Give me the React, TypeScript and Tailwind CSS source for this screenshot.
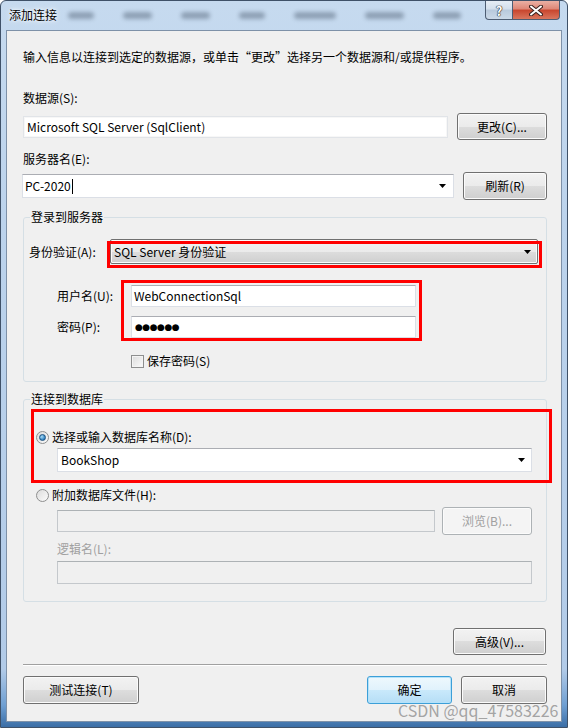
import type { ReactNode } from 'react';

// Win7-style push button faces
function Button({ children, className = '', primary = false, disabled = false }: { children: ReactNode, className?: string, primary?: boolean, disabled?: boolean }) {
    const face = primary
        ? 'border-[#3c9fd8] bg-[linear-gradient(#eef8fd_0%,#e0f2fc_50%,#c9e9fb_50%,#b6def6_100%)] shadow-[inset_0_0_0_1px_#b4e2fa]'
        : disabled
            ? 'border-[#adb2b5] bg-[#f4f4f4] text-[#a0a0a0] shadow-[inset_0_0_0_1px_#fbfbfb]'
            : 'border-[#707070] bg-[linear-gradient(#f2f2f2_0%,#ebebeb_50%,#dddddd_50%,#cfcfcf_100%)] shadow-[inset_0_0_0_1px_#fbfbfb]';
    return (
        <div className={`flex items-center justify-center rounded-[3px] border text-[12px] leading-4 ${face} ${className}`}>
            {children}
        </div>
    );
}

function Arrow() {
    return (
        <svg width="7" height="4" viewBox="0 0 7 4" className="shrink-0">
            <path d="M0 0h7L3.5 4z" fill="#000" />
        </svg>
    );
}

function TextBox({ children, className = '', disabled = false }: { children?: ReactNode, className?: string, disabled?: boolean }) {
    const look = disabled
        ? 'border-[#c4c8cc] border-t-[#adb2b5] bg-[#f0f0f0]'
        : 'border-[#dbdfe6] border-t-[#abadb3] bg-white';
    return (
        <div className={`flex items-center border px-[2px] text-[12px] leading-4 ${look} ${className}`}>
            {children}
        </div>
    );
}

function Radio({ checked = false }: { checked?: boolean }) {
    return (
        <div className="flex h-[13px] w-[13px] shrink-0 items-center justify-center rounded-full border border-[#8e8f8f] bg-[linear-gradient(135deg,#dcdcdc,#fbfbfb)]">
            {checked && <div className="h-[7px] w-[7px] rounded-full border border-[#1c5180] bg-[radial-gradient(circle_at_35%_35%,#a9dcf6,#2d7fbf_70%)]" />}
        </div>
    );
}

// a red frame drawn over the highlighted controls
function Mark({ className }: { className: string }) {
    return <div className={`pointer-events-none absolute border-[3px] border-[#ff0000] ${className}`} />;
}

function TitleBar() {
    return (
        <div className="flex h-[29px] shrink-0 items-start">
            <div className="mt-[6px] ml-[8px] text-[12px] leading-4 text-black [text-shadow:0_0_6px_#fff,0_0_3px_#fff]">添加连接</div>
            {/* glass shows the blurred menu behind it */}
            <div className="mt-[11px] ml-[11px] flex gap-[29px] opacity-40 blur-[2px]">
                <div className="h-[7px] w-[26px] rounded bg-[#3a4a5e]" />
                <div className="h-[7px] w-[29px] rounded bg-[#3a4a5e]" />
                <div className="h-[7px] w-[29px] rounded bg-[#3a4a5e]" />
                <div className="h-[7px] w-[26px] rounded bg-[#3a4a5e]" />
                <div className="h-[7px] w-[42px] rounded bg-[#3a4a5e]" />
                <div className="h-[7px] w-[39px] rounded bg-[#3a4a5e]" />
                <div className="h-[7px] w-[28px] rounded bg-[#3a4a5e]" />
            </div>
            <div className="ml-auto mr-[7px] flex">
                <div className="flex h-[19px] w-[28px] items-center justify-center rounded-bl-[4px] border border-t-0 border-[#4d5d73] bg-[linear-gradient(#e6edf5_0%,#d3dfec_45%,#b8c9dc_50%,#cbd9e8_100%)] text-[13px] font-bold leading-none text-white [text-shadow:0_0_1px_#222,0_0_1px_#222,0_0_1px_#222]">?</div>
                <div className="flex h-[19px] w-[47px] items-center justify-center rounded-br-[4px] border border-l-0 border-t-0 border-[#4d5d73] bg-[linear-gradient(#eab0a4_0%,#dd8676_45%,#c8452d_50%,#d9765e_100%)]">
                    <svg width="14" height="11" viewBox="0 0 14 11">
                        <path d="M2 1.5l10 8M12 1.5l-10 8" stroke="#3b2320" strokeWidth="4" strokeLinecap="round" />
                        <path d="M2 1.5l10 8M12 1.5l-10 8" stroke="#fff" strokeWidth="2" strokeLinecap="round" />
                    </svg>
                </div>
            </div>
        </div>
    );
}

export default function App() {
    return (
        <div className="relative flex h-[728px] w-[568px] flex-col overflow-hidden rounded-t-[6px] border border-[#3f5168] bg-[linear-gradient(#c6daef_0%,#bcd3ec_30%,#b2cbe8_92%,#6f9fd2_97%,#3b6ea6_100%)] font-['Noto_Sans_CJK_SC',sans-serif] text-black">
            <TitleBar />

            <div className="mx-[5px] flex h-[692px] flex-col border border-[#7e91a8] bg-[#f0f0f0] pl-[16px] pr-[14px]">
                <p className="mt-[18px] text-[12px] leading-4">输入信息以连接到选定的数据源，或单击“更改”选择另一个数据源和/或提供程序。</p>

                <div className="mt-[25px] text-[12px] leading-4">数据源(S):</div>
                <div className="mt-[7px] flex h-[27px] items-center gap-[9px]">
                    <TextBox className="h-[22px] flex-1 border-[#e1e4e8] border-t-[#e1e4e8] bg-[#f0f0f0] shadow-[inset_0_0_0_1px_#f7f7f7]">
                        <span className="ml-px">Microsoft SQL Server (SqlClient)</span>
                    </TextBox>
                    <Button className="h-[27px] w-[90px]">更改(C)...</Button>
                </div>

                <div className="mt-[11px] text-[12px] leading-4">服务器名(E):</div>
                <div className="mt-[5px] -ml-px flex h-[28px] items-center gap-[9px]">
                    <TextBox className="h-[24px] flex-1 justify-between pr-[7px]">
                        <span className="flex items-center">PC-2020<span className="ml-px inline-block h-[15px] w-px bg-black" /></span>
                        <Arrow />
                    </TextBox>
                    <Button className="h-[28px] w-[84px]">刷新(R)</Button>
                </div>

                {/* login */}
                <fieldset className="mt-[9px] rounded-[3px] border border-[#d5dfe5] pb-[12px]">
                    <legend className="ml-[6px] px-px text-[12px] leading-4">登录到服务器</legend>
                    <div className="mt-[14px] flex items-center pl-[5px] pr-[8px]">
                        <div className="w-[81px] shrink-0 text-[12px] leading-4">身份验证(A):</div>
                        <div className="relative flex-1">
                            <div className="flex h-[25px] items-center justify-between rounded-[2px] border border-[#707070] bg-[linear-gradient(#f2f2f2_0%,#ebebeb_50%,#dddddd_50%,#cfcfcf_100%)] pl-[3px] pr-[6px] text-[12px] leading-4 shadow-[inset_0_0_0_1px_#fbfbfb]">
                                <span>SQL Server 身份验证</span>
                                <Arrow />
                            </div>
                            <Mark className="-left-[3px] -right-[4px] top-[2px] -bottom-[4px]" />
                        </div>
                    </div>

                    <div className="mt-[21px] flex pl-[33px]">
                        <div className="flex w-[74px] shrink-0 flex-col gap-[9px] text-[12px] leading-4">
                            <div className="flex h-[22px] items-center">用户名(U):</div>
                            <div className="flex h-[22px] items-center">密码(P):</div>
                        </div>
                        <div className="relative flex w-[285px] flex-col gap-[9px]">
                            <TextBox className="h-[22px]">WebConnectionSql</TextBox>
                            <TextBox className="h-[22px]">
                                <span className="ml-px font-['DejaVu_Sans',sans-serif] text-[9px] tracking-[-0.5px]">●●●●●●</span>
                            </TextBox>
                            <Mark className="-left-[10px] -right-[6px] -top-[5px] -bottom-[3px]" />
                        </div>
                    </div>

                    <div className="mt-[15px] flex items-center gap-[3px] pl-[107px] text-[12px] leading-4">
                        <div className="h-[13px] w-[13px] border border-[#8e8f8f] bg-[linear-gradient(135deg,#dcdcdc,#fbfbfb)] shadow-[inset_0_0_0_1px_#f4f4f4]" />
                        <span>保存密码(S)</span>
                    </div>
                </fieldset>

                {/* database */}
                <fieldset className="mt-[9px] rounded-[3px] border border-[#d5dfe5] pb-[17px]">
                    <legend className="ml-[6px] px-px text-[12px] leading-4">连接到数据库</legend>
                    <div className="relative mt-[22px] ml-[12px] mr-[14px]">
                        <div className="flex items-center gap-[3px] text-[12px] leading-4">
                            <Radio checked />
                            <span>选择或输入数据库名称(D):</span>
                        </div>
                        <TextBox className="mt-[3px] ml-[21px] h-[24px] justify-between pr-[6px]">
                            <span className="ml-px">BookShop</span>
                            <Arrow />
                        </TextBox>
                        <Mark className="-left-[5px] -right-[20px] -top-[20px] -bottom-[11px]" />
                    </div>

                    <div className="mt-[15px] ml-[12px] flex items-center gap-[3px] text-[12px] leading-4">
                        <Radio />
                        <span>附加数据库文件(H):</span>
                    </div>
                    <div className="mt-[4px] ml-[33px] mr-[14px] flex h-[28px] items-center gap-[7px]">
                        <TextBox disabled className="h-[22px] flex-1" />
                        <Button disabled className="h-[28px] w-[90px]">浏览(B)...</Button>
                    </div>
                    <div className="mt-[6px] ml-[33px] text-[12px] leading-4 text-[#a0a0a0]">逻辑名(L):</div>
                    <TextBox disabled className="mt-[4px] ml-[33px] mr-[14px] h-[23px]" />
                </fieldset>

                <Button className="mt-[26px] mr-px h-[27px] w-[93px] self-end">高级(V)...</Button>
                <div className="mt-[9px] border-t border-b border-t-[#a0a0a0] border-b-white" />

                <div className="mt-[10px] flex items-center">
                    <Button className="h-[28px] w-[116px]">测试连接(T)</Button>
                    <Button primary className="ml-auto h-[28px] w-[85px]">确定</Button>
                    <Button className="ml-[9px] h-[28px] w-[86px]">取消</Button>
                </div>
            </div>

            <div className="pointer-events-none absolute left-[397px] top-[699px] whitespace-nowrap text-[16px] leading-5 text-[#8f8f8f]/80">CSDN @qq_47583226</div>
        </div>
    );
}
